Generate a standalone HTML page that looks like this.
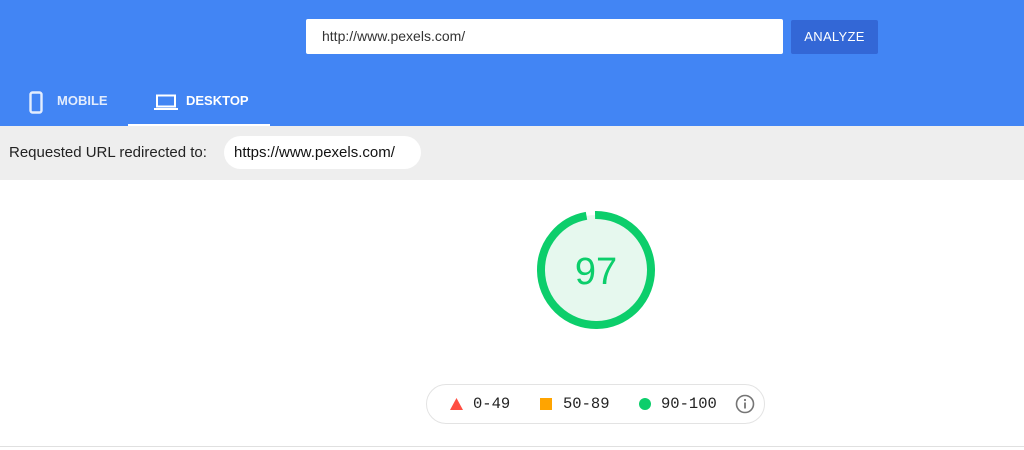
<!DOCTYPE html>
<html><head><meta charset="utf-8"><style>
*{margin:0;padding:0;box-sizing:border-box}
body{width:1024px;height:450px;overflow:hidden;background:#fff;font-family:"Liberation Sans",sans-serif;position:relative}
.hdr{position:absolute;left:0;top:0;width:1024px;height:126px;background:#4285f4}
.inp{position:absolute;left:306px;top:19px;width:477px;height:35px;background:#fff;border-radius:2px;font-size:14px;color:#333;padding:9px 16px}
.btn{position:absolute;left:791px;top:20px;width:87px;height:34px;background:#3367d6;border-radius:2px;color:#fff;font-size:13px;text-align:center;line-height:34px;letter-spacing:.3px}
.tab{position:absolute;top:93px;color:#fff;font-size:13px;font-weight:bold;opacity:.85}
.ul{position:absolute;left:128px;top:124px;width:142px;height:2px;background:#fff}
.bar{position:absolute;left:0;top:126px;width:1024px;height:54px;background:#eeeeee}
.req{position:absolute;left:9px;top:144px;font-size:15px;color:#222}
.pill{position:absolute;left:224px;top:136px;width:197px;height:33px;background:#fff;border-radius:17px;font-size:15px;color:#111;padding:8px 10px}
.leg{position:absolute;left:426px;top:384px;width:339px;height:40px;border:1px solid #e3e3e3;border-radius:20px;font-family:"Liberation Mono",monospace;font-size:15.5px;color:#222}
.leg span{position:absolute;top:10px}
.line{position:absolute;left:0;top:446px;width:1024px;height:1px;background:#e0e0e0}
</style></head><body>
<div class="hdr"></div>
<div class="inp">http://www.pexels.com/</div>
<div class="btn">ANALYZE</div>
<svg style="position:absolute;left:29px;top:91px" width="14" height="23"><rect x="1.5" y="1.5" width="11" height="20" rx="2" fill="none" stroke="#fff" stroke-width="2.4" opacity=".85"/></svg>
<div class="tab" style="left:57px">MOBILE</div>
<svg style="position:absolute;left:154px;top:94px" width="24" height="17"><rect x="3" y="1.5" width="18" height="11" fill="none" stroke="#fff" stroke-width="2"/><rect x="0" y="14" width="24" height="2" fill="#fff"/></svg>
<div class="tab" style="left:186px;opacity:1">DESKTOP</div>
<div class="ul"></div>
<div class="bar"></div>
<div class="req">Requested URL redirected to:</div>
<div class="pill">https://www.pexels.com/</div>
<svg style="position:absolute;left:536px;top:210px" width="120" height="120">
<circle cx="60" cy="60" r="55" fill="#e6f8ee"/>
<circle cx="60" cy="60" r="55" fill="none" stroke="#0cce6b" stroke-width="8" stroke-dasharray="336.6 9" transform="rotate(-91 60 60)"/>
<text x="60" y="74" text-anchor="middle" font-family="Liberation Sans,sans-serif" font-size="38" fill="#0cce6b">97</text>
</svg>
<div class="leg">
<svg style="position:absolute;left:23px;top:13px" width="13" height="12"><polygon points="6.5,0 13,12 0,12" fill="#ff4e42"/></svg>
<span style="left:46px">0-49</span>
<svg style="position:absolute;left:113px;top:13px" width="12" height="12"><rect width="12" height="12" fill="#ffa400"/></svg>
<span style="left:136px">50-89</span>
<svg style="position:absolute;left:212px;top:13px" width="12" height="12"><circle cx="6" cy="6" r="6" fill="#0cce6b"/></svg>
<span style="left:234px">90-100</span>
<svg style="position:absolute;left:308px;top:9px" width="20" height="20"><circle cx="10" cy="10" r="8.5" fill="none" stroke="#757575" stroke-width="1.6"/><rect x="9.1" y="8.5" width="1.8" height="6" fill="#757575"/><circle cx="10" cy="6" r="1.1" fill="#757575"/></svg>
</div>
<div class="line"></div>
</body></html>
